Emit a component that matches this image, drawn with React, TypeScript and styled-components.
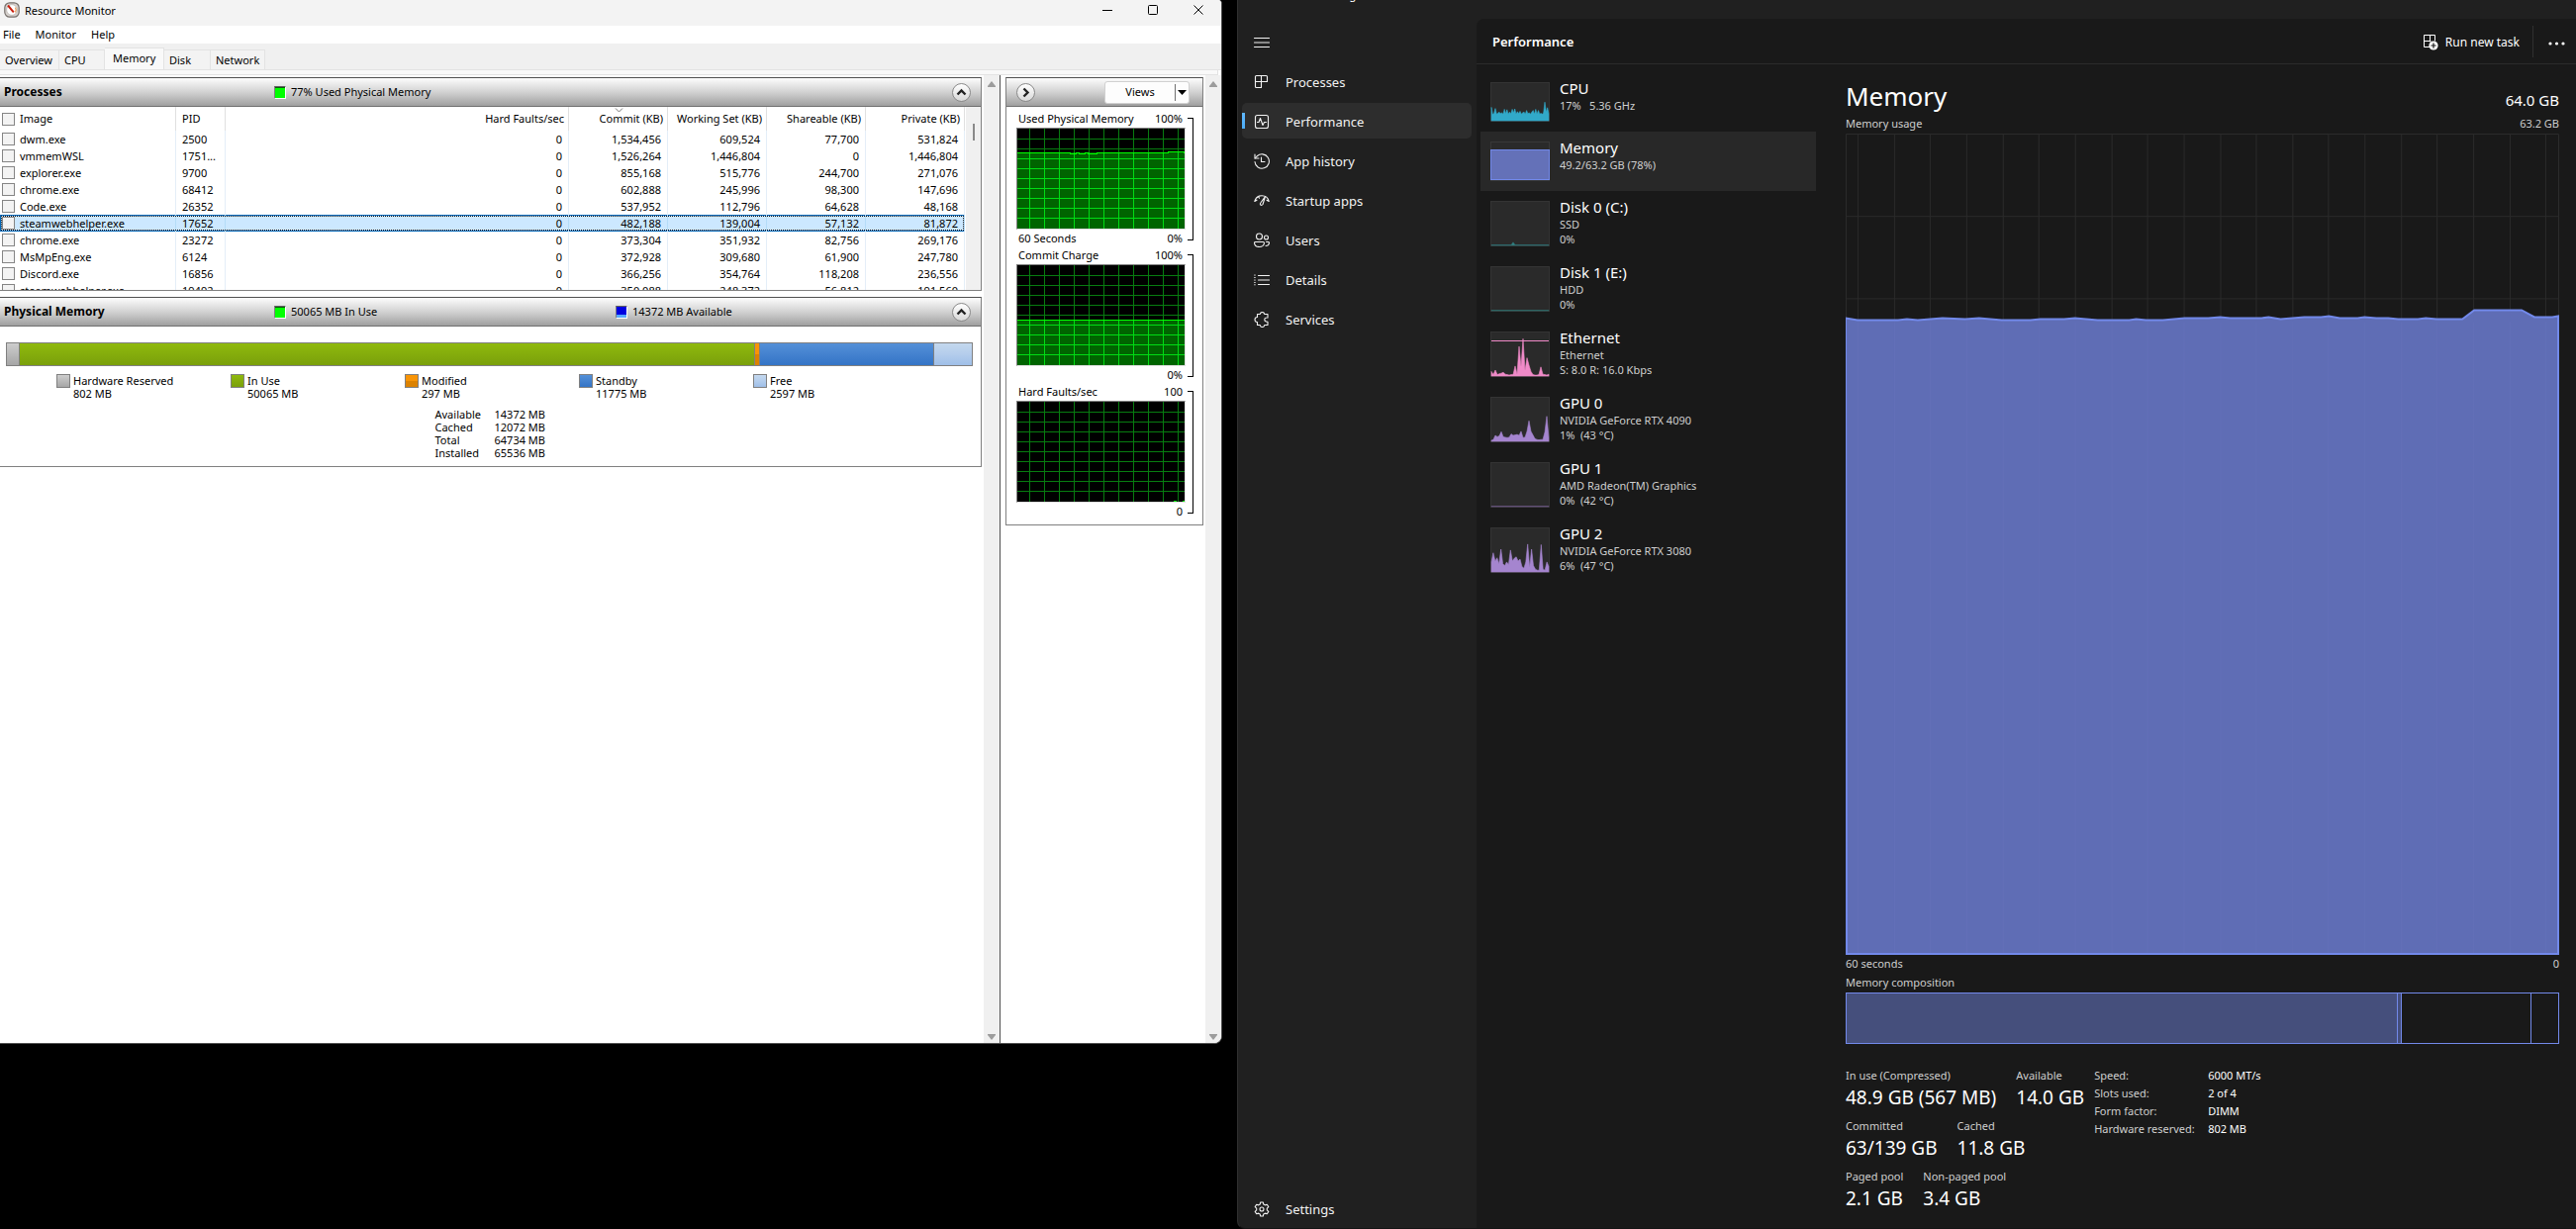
import React from 'react';
import styled, { createGlobalStyle, css } from 'styled-components';

const GlobalStyle = createGlobalStyle`
  *, *::before, *::after { box-sizing: border-box; }
  html, body, #root { height: 100%; }
  body {
    margin: 0;
    background: #000;
    font-family: "Noto Sans", "Open Sans", sans-serif;
    font-size: 11px;
    line-height: 16px;
    overflow: hidden;
  }
  button {
    font: inherit;
    color: inherit;
    background: none;
    border: 0;
    padding: 0;
    margin: 0;
    text-align: left;
    cursor: default;
  }
  h1, h2, h3, p, dl, dd, dt, ul { margin: 0; padding: 0; font: inherit; list-style: none; }
`;

const Desktop = styled.div`
  display: grid;
  grid-template-columns: minmax(0, 1250fr) minmax(0, 1353fr);
  height: 100vh;
  background: #000;
`;

/* ---------- Resource Monitor ---------- */

const MonitorSlot = styled.div`
  display: flex;
  padding: 0 15px 187px 0;
  min-height: 0;
`;

const MonitorWindow = styled.section`
  flex: 1;
  min-width: 0;
  display: flex;
  flex-direction: column;
  overflow: hidden;
  background: #fff;
  color: #000;
  border-radius: 0 4px 8px 0;
  border-right: 1px solid #505050;
  border-bottom: 1px solid #505050;
`;

const MonitorTitle = styled.header`
  display: flex;
  align-items: flex-start;
  height: 26px;
  padding-left: 4px;
  background: #f3f3f3;
  svg { display: block; }
  h1 { flex: 1; padding: 3px 0 0 5px; }
`;

const AppIcon = styled.svg`
  margin-top: 2px;
`;

const CaptionButton = styled.button`
  width: 46px;
  height: 20px;
  display: grid;
  place-items: center;
`;

const MenuBar = styled.nav`
  display: flex;
  gap: 15px;
  height: 18px;
  padding-left: 3px;
  align-items: center;
  background: #fff;
`;

const TabStrip = styled.div`
  display: flex;
  align-items: flex-end;
  height: 27px;
  background: #f0f0f0;
  border-bottom: 1px solid #e3e3e3;
`;

const Tab = styled.button<{ $width: number; $active?: boolean }>`
  width: ${p => p.$width}px;
  height: 20px;
  padding-left: 5px;
  background: #f3f3f3;
  border: solid #e3e3e3;
  border-width: 1px 1px 0 0;
  white-space: nowrap;
  ${p => p.$active && css`
    height: 22px;
    padding: 0 0 1px 8px;
    background: #f9f9f9;
  `}
`;

const TabEdge = styled.div`
  height: 5px;
  margin-right: 3px;
  background: #f9f9f9;
  border: solid #e3e3e3;
  border-width: 0 1px 1px 0;
`;

const MonitorBody = styled.div`
  flex: 1;
  min-height: 0;
  display: flex;
`;

const Pane = styled.div`
  flex: 1;
  min-width: 0;
  display: flex;
  flex-direction: column;
  gap: 6px;
  padding: 2px 2px 0 0;
`;

const SidePane = styled.aside`
  width: 208px;
  padding: 2px 2px 0 5px;
  border-left: 1px solid #505050;
`;

const Frame = styled.section`
  border: 1px solid #808080;
  border-top-color: #505050;
  background: #fff;
`;

const OpenFrame = styled(Frame)`
  border-left: 0;
`;

const headerSurface = css`
  height: 29px;
  background: linear-gradient(#fdfdfd, #d2d2d2 50%, #9f9f9f);
  border-bottom: 1px solid #707070;
`;

const FrameHeader = styled.header`
  ${headerSurface}
  display: grid;
  grid-template-columns: 277fr 345fr 340fr 29px;
  align-items: center;
  h2 { padding-left: 4px; font-size: 12px; font-weight: 700; }
`;

const Meter = styled.div`
  display: flex;
  align-items: center;
  gap: 5px;
`;

const MeterBox = styled.i<{ $tone: 'green' | 'blue' }>`
  width: 12px;
  height: 13px;
  border: 1px solid #fff;
  border-top-color: #606060;
  border-left-color: #808080;
  background: ${p => p.$tone === 'green'
    ? 'linear-gradient(#0a5a0a 1px, #00ff00 1px)'
    : 'linear-gradient(#0000e0 8px, #58a8ff 8px)'};
`;

const RoundButton = styled.button`
  width: 19px;
  height: 19px;
  display: grid;
  place-items: center;
  border: 1px solid #8a8a8a;
  border-radius: 50%;
  background: linear-gradient(#fff, #d8d8d8);
`;

const TableArea = styled.div`
  display: flex;
  height: 185px;
  overflow: hidden;
`;

const ProcessTable = styled.table`
  flex: 1;
  width: 100%;
  height: max-content;
  table-layout: fixed;
  border-collapse: separate;
  border-spacing: 0;
  th, td {
    padding: 0 6px 0 0;
    border-right: 1px solid #e4eef8;
    font-weight: 400;
    text-align: right;
    white-space: nowrap;
    overflow: hidden;
  }
  th { position: relative; height: 24px; padding-right: 4px; border-color: #e0e0e0; }
  td { height: 17px; line-height: 16px; }
  th:nth-child(1), td:nth-child(1) { padding-left: 2px; text-align: left; }
  th:nth-child(2), td:nth-child(2) { padding-left: 6px; text-align: left; }
`;

const Row = styled.tr<{ $selected?: boolean }>`
  ${p => p.$selected && css`
    background: #cce8ff;
    box-shadow: inset 0 0 0 1px #0067b8;
    outline: 1px dotted #101010;
    outline-offset: -2px;
    td { border-color: #b4dcf8; }
  `}
`;

const CheckLabel = styled.label`
  display: flex;
  align-items: center;
  gap: 5px;
`;

const Check = styled.input`
  appearance: none;
  flex: none;
  width: 13px;
  height: 13px;
  margin: 0;
  border: 1px solid #858585;
  background: #f3f3f3;
`;

const SortMark = styled.svg`
  position: absolute;
  top: 1px;
  left: 46px;
`;

const TableScroll = styled.div`
  width: 16px;
  flex: none;
  padding: 17px 0 0 7px;
  background: #f0f0f0;
  border-left: 1px solid #fff;
  &::before {
    content: "";
    display: block;
    width: 2px;
    height: 17px;
    background: #8a8a8a;
  }
`;

const ScrollTrack = styled.div`
  width: 16px;
  flex: none;
  display: flex;
  flex-direction: column;
  justify-content: space-between;
  align-items: center;
  padding: 6px 0 3px;
  background: #f0f0f0;
`;

const MemoryBody = styled.div`
  padding: 16px 8px 7px 6px;
`;

const tones = {
  reserved: 'linear-gradient(#cdcdcd, #a6a6a6)',
  inUse: 'linear-gradient(#8fb90d, #7aa00b)',
  modified: 'linear-gradient(#f89406 50%, #dc8200 50%)',
  standby: 'linear-gradient(#5490d8, #3474c6)',
  free: 'linear-gradient(#c4d8ee, #b4cdec 50%, #9fbfe8)',
};
type Tone = keyof typeof tones;

const MemoryBar = styled.div`
  display: flex;
  height: 24px;
  border: 1px solid #808080;
`;

const Segment = styled.div<{ $tone: Tone; $size: number }>`
  flex: ${p => p.$size} 1 0;
  min-width: 0;
  background: ${p => tones[p.$tone]};
  & + & { border-left: 1px solid #808080; }
`;

const Legend = styled.ul`
  display: grid;
  grid-template-columns: repeat(5, 1fr);
  margin-top: 8px;
  padding: 0 46px 0 51px;
  line-height: 13px;
  li { display: flex; gap: 3px; }
`;

const Swatch = styled.i<{ $tone: Tone }>`
  width: 14px;
  height: 14px;
  flex: none;
  border: 1px solid #808080;
  background: ${p => tones[p.$tone]};
`;

const Totals = styled.dl`
  display: grid;
  grid-template-columns: 60px 50px;
  justify-content: center;
  margin-top: 8px;
  line-height: 13px;
  white-space: nowrap;
`;

const SideHeader = styled.header`
  ${headerSurface}
  display: flex;
  align-items: center;
  justify-content: space-between;
  padding: 0 13px 0 10px;
`;

const ViewsBox = styled.div`
  display: flex;
  width: 86px;
  height: 23px;
  align-items: center;
  background: #fdfdfd;
  border: 1px solid #d0d0d0;
  border-radius: 3px;
  button:first-child { flex: 1; text-align: center; }
  button:last-child { width: 14px; height: 17px; border-left: 1px solid #707070; display: grid; place-items: center; }
`;

const Graphs = styled.div`
  padding: 4px 9px 4px 10px;
`;

const Graph = styled.figure`
  display: grid;
  grid-template-columns: 1fr 8px;
  margin: 0;
`;

const GraphLabels = styled.div`
  display: flex;
  justify-content: space-between;
  height: 17px;
  padding: 0 3px 0 2px;
`;

const GraphCanvas = styled.svg`
  display: block;
  width: 100%;
  height: 103px;
  background: #000;
  border: 1px solid #808080;
  border-right-color: #e0e0e0;
  border-bottom-color: #e0e0e0;
`;

const Bracket = styled.i`
  grid-column: 2;
  margin: 7px 0 7px 2px;
  border: solid #000;
  border-width: 1px 1px 1px 0;
`;

const GraphFoot = styled(GraphLabels)`
  height: 18px;
  padding-top: 1px;
`;

/* ---------- Task Manager ---------- */

const TaskWindow = styled.section`
  display: flex;
  flex-direction: column;
  height: calc(100vh + 29px);
  margin-top: -29px;
  background: #202020;
  color: #fff;
  border-left: 1px solid #303030;
  border-bottom: 1px solid #141414;
  border-radius: 0 0 0 8px;
`;

const TaskTitle = styled.header`
  height: 48px;
  flex: none;
  display: flex;
  align-items: center;
  padding-left: 58px;
`;

const TaskBody = styled.div`
  flex: 1;
  min-height: 0;
  display: flex;
`;

const NavRail = styled.nav`
  width: 241px;
  flex: none;
  display: flex;
  flex-direction: column;
  gap: 4px;
  padding: 5px 5px 2px 4px;
  font-size: 13px;
`;

const NavButton = styled.button<{ $active?: boolean }>`
  display: flex;
  align-items: center;
  gap: 16px;
  height: 36px;
  padding: 1px 0 0 12px;
  border-radius: 5px;
  color: #f2f2f2;
  ${p => p.$active && css`
    background: linear-gradient(#60b8ff, #4cacf5) left center / 3px 16px no-repeat, #2d2d2d;
  `}
`;

const NavSpacer = styled.div`
  flex: 1;
`;

const Content = styled.main`
  flex: 1;
  min-width: 0;
  display: flex;
  flex-direction: column;
  background: #191919;
  border-radius: 8px 0 0 0;
`;

const CommandBar = styled.header`
  display: flex;
  align-items: center;
  height: 46px;
  padding: 0 11px 0 16px;
  border-bottom: 1px solid #2b2b2b;
  font-size: 12px;
  h2 { flex: 1; font-size: 13px; font-weight: 600; }
`;

const RunButton = styled.button`
  display: flex;
  align-items: center;
  gap: 7px;
  padding-top: 2px;
`;

const Divider = styled.i`
  width: 1px;
  height: 32px;
  margin: 0 15px 0 13px;
  background: #303030;
`;

const Panels = styled.div`
  flex: 1;
  min-height: 0;
  display: flex;
`;

const DeviceList = styled.div`
  width: 343px;
  flex: none;
  padding: 8px 0 0 4px;
`;

const Device = styled.button<{ $active?: boolean; $tall?: boolean }>`
  display: flex;
  align-items: flex-start;
  width: 100%;
  gap: 10px;
  height: ${p => (p.$tall ? 66 : 60)}px;
  padding: 6px 0 0 10px;
  background: ${p => (p.$active ? '#282828' : 'transparent')};
  color: #cfcfcf;
  line-height: 15px;
  svg { flex: none; margin-top: 4px; }
  h3 { font-size: 15px; line-height: 20px; color: #fff; }
`;

const Detail = styled.section`
  flex: 1;
  min-width: 0;
  display: flex;
  flex-direction: column;
  padding: 13px 17px 17px 30px;
  color: #cfcfcf;
`;

const DetailTitle = styled.div`
  display: flex;
  justify-content: space-between;
  align-items: baseline;
  color: #fff;
  font-size: 15px;
  height: 39px;
  line-height: 38px;
  h3 { font-size: 26px; }
`;

const CaptionRow = styled.div`
  display: flex;
  justify-content: space-between;
  height: 18px;
`;

const UsageChart = styled.svg`
  flex: 1;
  min-height: 0;
  width: 100%;
  display: block;
  path { vector-effect: non-scaling-stroke; }
`;

const FootRow = styled(CaptionRow)`
  height: 20px;
  padding-top: 1px;
`;

const Composition = styled.div`
  display: flex;
  height: 52px;
  flex: none;
  margin: 2px 0 23px;
  border: 1px solid #7289ea;
`;

const CompositionPart = styled.div<{ $size: number; $fill?: boolean }>`
  flex: ${p => p.$size} 1 0;
  background: ${p => (p.$fill ? '#454f7c' : 'transparent')};
  & + & { border-left: 1px solid #7289ea; }
`;

const Stats = styled.div`
  display: flex;
  gap: 10px;
  line-height: 18px;
  white-space: nowrap;
`;

const StatRows = styled.div`
  display: grid;
  gap: 7px;
`;

const StatRow = styled.dl`
  display: flex;
  gap: 20px;
  dd { color: #fff; font-size: 19px; line-height: 26px; }
`;

const Specs = styled.dl`
  display: grid;
  grid-template-columns: 115px auto;
  align-content: start;
  dd { color: #fff; }
`;

/* ---------- data ---------- */

const processes = [
  ['dwm.exe', '2500', '0', '1,534,456', '609,524', '77,700', '531,824'],
  ['vmmemWSL', '1751...', '0', '1,526,264', '1,446,804', '0', '1,446,804'],
  ['explorer.exe', '9700', '0', '855,168', '515,776', '244,700', '271,076'],
  ['chrome.exe', '68412', '0', '602,888', '245,996', '98,300', '147,696'],
  ['Code.exe', '26352', '0', '537,952', '112,796', '64,628', '48,168'],
  ['steamwebhelper.exe', '17652', '0', '482,188', '139,004', '57,132', '81,872'],
  ['chrome.exe', '23272', '0', '373,304', '351,932', '82,756', '269,176'],
  ['MsMpEng.exe', '6124', '0', '372,928', '309,680', '61,900', '247,780'],
  ['Discord.exe', '16856', '0', '366,256', '354,764', '118,208', '236,556'],
  ['steamwebhelper.exe', '19492', '0', '350,088', '248,372', '56,812', '191,560'],
];

const memory: { label: string; mb: number; tone: Tone }[] = [
  { label: 'Hardware Reserved', mb: 802, tone: 'reserved' },
  { label: 'In Use', mb: 50065, tone: 'inUse' },
  { label: 'Modified', mb: 297, tone: 'modified' },
  { label: 'Standby', mb: 11775, tone: 'standby' },
  { label: 'Free', mb: 2597, tone: 'free' },
];

const usedLine = 'M0 24H53V25H59V24H62V25H68V24H71V25H80V24H152V23H168V24H170';

const usagePoints: [number, number][] = [
  [0, 186], [12, 188], [53, 188], [62, 187], [73, 188], [98, 186], [121, 187], [135, 186], [158, 188], [187, 188],
  [197, 187], [221, 187], [232, 186], [255, 188], [287, 188], [294, 187], [304, 188], [321, 188], [343, 186],
  [367, 186], [379, 185], [389, 186], [421, 186], [428, 185], [440, 187], [464, 185], [481, 185], [489, 184],
  [500, 186], [518, 186], [525, 185], [537, 186], [549, 186], [559, 187], [579, 187], [587, 186], [598, 187],
  [624, 187], [636, 178], [684, 178], [697, 185], [715, 185], [721, 184],
];

interface Spark { color: string; fill: string; values: number[] }
const sparks: Record<string, Spark> = {
  cpu: { color: '#31a9c9', fill: '#31a9c9', values: [34, 16, 18, 31, 17, 19, 22, 18, 20, 17, 29, 18, 28, 17, 22, 18, 29, 20, 30, 17, 23, 18, 24, 17, 20, 22, 17, 26, 18, 20, 17, 22, 26, 17, 29, 17, 26, 17, 19, 17, 20, 47, 22, 33, 18] },
  disk0: { color: '#2f6f72', fill: '#2f8080', values: [1, 1, 1, 1, 1, 1, 1, 1, 1, 1, 1, 7, 1, 1, 1, 1, 1, 1, 1, 1, 1, 1, 1, 1, 1, 1, 1, 1, 1, 1] },
  disk1: { color: '#2f6f6c', fill: '#2f6f6c', values: [1, 1] },
  net: { color: '#f08ac8', fill: '#f08ac8', values: [10, 3, 13, 3, 5, 6, 8, 4, 3, 2, 3, 3, 22, 4, 65, 20, 82, 12, 40, 24, 10, 3, 2, 2, 3, 20, 4, 3, 2, 4] },
  gpu0: { color: '#a585cf', fill: '#a585cf', values: [2, 4, 13, 10, 12, 21, 10, 9, 8, 9, 16, 13, 14, 15, 13, 22, 8, 9, 22, 45, 22, 14, 6, 4, 3, 4, 4, 20, 55, 8] },
  gpu1: { color: '#6c5884', fill: '#6c5884', values: [1, 1] },
  gpu2: { color: '#a585cf', fill: '#a585cf', values: [22, 42, 24, 31, 18, 50, 18, 14, 22, 16, 48, 24, 30, 33, 24, 28, 12, 8, 22, 61, 10, 50, 14, 6, 4, 4, 60, 6, 4, 22, 12] },
};

const SparkChart = ({ kind, h }: { kind: string; h: number }) => {
  const s = sparks[kind];
  const bottom = h - 1;
  const step = 58 / (s.values.length - 1);
  const pts = s.values.map((v, i) => `${(1 + i * step).toFixed(1)} ${(bottom - (v / 100) * h).toFixed(1)}`);
  return (
    <svg width="60" height={h} viewBox={`0 0 60 ${h}`} aria-hidden="true">
      <rect x=".5" y=".5" width="59" height={h - 1} fill="#2a2a2a" stroke="#343434" />
      <path d={`M1 ${bottom}L${pts.join('L')}L59 ${bottom}Z`} fill={s.fill} stroke={s.color} strokeWidth=".6" />
      {kind === 'net' && <path d="M1 9.5H59" stroke="#f08ac8" />}
    </svg>
  );
};

const MemorySpark = () => (
  <svg width="60" height="40" viewBox="0 0 60 40" aria-hidden="true">
    <rect x=".5" y=".5" width="59" height="39" fill="#2a2a2a" stroke="#383838" />
    <rect x=".5" y="8.5" width="59" height="30" fill="#6471b8" stroke="#7289ea" />
  </svg>
);

const stroke = { fill: 'none', stroke: 'currentColor', strokeLinejoin: 'round', strokeLinecap: 'round' } as const;

const icons: Record<string, React.ReactNode> = {
  menu: <path d="M.5 3.5H15.5M.5 8H15.5M.5 12.5H15.5" />,
  processes: <path d="M2.5 1.5H12.5Q13.5 1.5 13.5 2.5V7.5H1.5V2.5Q1.5 1.5 2.5 1.5ZM7.5 1.5V13.5H2.5Q1.5 13.5 1.5 12.5V7.5" />,
  performance: <><rect x="1.5" y="1.5" width="13" height="13" rx="2" /><path d="M3.5 8.5H5L6.5 4.5L9 11.5L10.5 8.5H12.5" /></>,
  history: <><path d="M1 8.5A7.2 7.2 0 1 0 3 3L1.2 5" /><path d="M1 1V5H5M7.5 4V8.5H11" /></>,
  startup: <><path d="M.8 8.5A7.4 7.4 0 0 1 15.2 8.5M.8 8.5L3 7.2M15.2 8.5L13 7.2M4.5 3.6L5.5 5.2" /><path d="M11.5 3.5L9 11.5Q7.8 13 6.6 11.8Q6 11 6.8 10L11.5 3.5Z" /></>,
  users: <><circle cx="5.5" cy="4" r="3" /><circle cx="12.5" cy="5" r="2" /><path d="M1.5 9.5H9.5Q10.5 9.5 10.5 10.5Q10 14.5 5.5 14.5T.5 10.5Q.5 9.5 1.5 9.5ZM12.5 9.5H14.5Q15.5 9.5 15.5 10.5Q15 13.5 12 13.5" /></>,
  details: <path d="M4.5 3.5H15.5M4.5 8H15.5M4.5 12.5H15.5M.7 3H1.2M.7 5.5H1.2M.7 8H1.2M.7 10.5H1.2M.7 12.8H1.2" />,
  services: <path d="M3.5 2.5H6.3Q6.5.5 8.5.5T10.7 2.5H14V6Q10.8 5.8 10.8 8T14 10.2V13.5H10.7Q10.5 15.5 8.5 15.5T6.3 13.5H3.5V10.5Q1 10.5 1 8T3.5 5.5Z" />,
  settings: <><path d="M6.7 1H9.3L9.8 3L11.3 3.9L13.3 3.3L14.8 5.6L13.3 7.1V8.9L14.8 10.4L13.3 12.7L11.3 12.1L9.8 13L9.3 15H6.7L6.2 13L4.7 12.1L2.7 12.7L1.2 10.4L2.7 8.9V7.1L1.2 5.6L2.7 3.3L4.7 3.9L6.2 3Z" /><circle cx="8" cy="8" r="2" /></>,
};

const Icon = ({ name }: { name: string }) => (
  <svg width="16" height="16" viewBox="0 0 16 16" {...stroke} strokeWidth="1.1" aria-hidden="true">{icons[name]}</svg>
);

const navItems = [
  ['processes', 'Processes'], ['performance', 'Performance'], ['history', 'App history'], ['startup', 'Startup apps'],
  ['users', 'Users'], ['details', 'Details'], ['services', 'Services'],
];

const devices = [
  { kind: 'cpu', name: 'CPU', lines: ['17%\u2002 5.36 GHz'] },
  { kind: 'memory', name: 'Memory', lines: ['49.2/63.2 GB (78%)'] },
  { kind: 'disk0', name: 'Disk 0 (C:)', lines: ['SSD', '0%'] },
  { kind: 'disk1', name: 'Disk 1 (E:)', lines: ['HDD', '0%'] },
  { kind: 'net', name: 'Ethernet', lines: ['Ethernet', 'S: 8.0 R: 16.0 Kbps'] },
  { kind: 'gpu0', name: 'GPU 0', lines: ['NVIDIA GeForce RTX 4090', '1%\u2002(43 °C)'] },
  { kind: 'gpu1', name: 'GPU 1', lines: ['AMD Radeon(TM) Graphics', '0%\u2002(42 °C)'] },
  { kind: 'gpu2', name: 'GPU 2', lines: ['NVIDIA GeForce RTX 3080', '6%\u2002(47 °C)'] },
];

/* ---------- pieces ---------- */

const Chevron = ({ side }: { side?: boolean }) => (
  <svg width="11" height="11" viewBox="0 0 11 11" fill="none" stroke="#222" strokeWidth="2.4" aria-hidden="true">
    <path d={side ? 'M3.5 1.5L7.5 5.5L3.5 9.5' : 'M1.5 7.5L5.5 3.5L9.5 7.5'} />
  </svg>
);

const Scroll = () => (
  <ScrollTrack>
    <svg width="10" height="6" viewBox="0 0 10 6" aria-hidden="true"><path d="M5 0L9 5V6H1V5Z" fill="#9c9c9c" /></svg>
    <svg width="10" height="6" viewBox="0 0 10 6" aria-hidden="true"><path d="M5 6L9 1V0H1V1Z" fill="#9c9c9c" /></svg>
  </ScrollTrack>
);

const gridLines = (from: number) => {
  const cols = Array.from({ length: 11 }, (_, i) => `M${12.5 + i * 15} ${from}V101`).join('');
  const rows = Array.from({ length: 9 }, (_, i) => 10.5 + i * 10).filter(y => y >= from).map(y => `M0 ${y}H169`).join('');
  return cols + rows;
};

const MiniGraph = ({ title, max, left, min, line, level }: { title: string; max: string; left?: string; min: string; line?: string; level?: number }) => (
  <Graph>
    <div>
      <GraphLabels><span>{title}</span><span>{max}</span></GraphLabels>
      <GraphCanvas viewBox="0 0 169 101" preserveAspectRatio="none" shapeRendering="crispEdges" fill="none">
        <path d={gridLines(0)} stroke="#077c10" />
        {line && level && (
          <>
            <rect y={level} width="169" height={101 - level} fill="#006400" />
            <path d={gridLines(level)} stroke="#00dc14" />
            <path d={line} stroke="#00ff00" transform="translate(0 .5)" />
          </>
        )}
        {!line && <path d="M158 100.5H161M167 100.5H169" stroke="#00ff00" />}
      </GraphCanvas>
      <GraphFoot><span>{left}</span><span>{min}</span></GraphFoot>
    </div>
    <Bracket />
  </Graph>
);

const ResourceMonitor = () => (
  <MonitorWindow>
    <MonitorTitle>
      <AppIcon width="16" height="16" viewBox="0 0 16 16" aria-hidden="true">
        <rect x=".8" y=".8" width="14.4" height="14.4" rx="5" fill="#d8d4d0" stroke="#77706c" strokeWidth="1.2" />
        <circle cx="8" cy="8" r="5.4" fill="#fff" stroke="#b9b2ae" strokeWidth=".8" />
        <path d="M11.5 5.5Q13 8 11.5 10.5" fill="none" stroke="#e8a060" strokeWidth="1.4" />
        <path d="M4 3.5L9.8 10.4" stroke="#c81e0e" strokeWidth="2" />
      </AppIcon>
      <h1>Resource Monitor</h1>
      <CaptionButton aria-label="Minimize"><svg width="10" height="10" viewBox="0 0 10 10"><path d="M0 5.5H10" stroke="#000" /></svg></CaptionButton>
      <CaptionButton aria-label="Maximize"><svg width="10" height="10" viewBox="0 0 10 10"><rect x=".5" y=".5" width="9" height="9" rx="1" fill="none" stroke="#000" /></svg></CaptionButton>
      <CaptionButton aria-label="Close"><svg width="10" height="10" viewBox="0 0 10 10"><path d="M.5 .5L9.5 9.5M9.5 .5L.5 9.5" stroke="#000" /></svg></CaptionButton>
    </MonitorTitle>
    <MenuBar><button>File</button><button>Monitor</button><button>Help</button></MenuBar>
    <TabStrip role="tablist">
      <Tab role="tab" $width={60}>Overview</Tab>
      <Tab role="tab" $width={46}>CPU</Tab>
      <Tab role="tab" aria-selected $width={60} $active>Memory</Tab>
      <Tab role="tab" $width={47}>Disk</Tab>
      <Tab role="tab" $width={55}>Network</Tab>
    </TabStrip>
    <TabEdge />
    <MonitorBody>
      <Pane>
        <OpenFrame>
          <FrameHeader>
            <h2>Processes</h2>
            <Meter><MeterBox $tone="green" />77% Used Physical Memory</Meter>
            <span />
            <RoundButton aria-label="Collapse processes"><Chevron /></RoundButton>
          </FrameHeader>
          <TableArea>
            <ProcessTable>
              <colgroup>
                <col width="178" /><col width="50" /><col /><col width="100" /><col width="100" /><col width="100" /><col width="100" />
              </colgroup>
              <thead>
                <tr>
                  <th><CheckLabel><Check type="checkbox" />Image</CheckLabel></th>
                  <th>PID</th>
                  <th>Hard Faults/sec</th>
                  <th>
                    <SortMark width="9" height="5" viewBox="0 0 9 5" fill="none" stroke="#777"><path d="M1 .5L4.5 4L8 .5" /></SortMark>
                    Commit (KB)
                  </th>
                  <th>Working Set (KB)</th>
                  <th>Shareable (KB)</th>
                  <th>Private (KB)</th>
                </tr>
              </thead>
              <tbody>
                {processes.map(([name, ...cells], i) => (
                  <Row key={i} $selected={i === 5}>
                    <td><CheckLabel><Check type="checkbox" />{name}</CheckLabel></td>
                    {cells.map((c, j) => <td key={j}>{c}</td>)}
                  </Row>
                ))}
              </tbody>
            </ProcessTable>
            <TableScroll />
          </TableArea>
        </OpenFrame>
        <OpenFrame>
          <FrameHeader>
            <h2>Physical Memory</h2>
            <Meter><MeterBox $tone="green" />50065 MB In Use</Meter>
            <Meter><MeterBox $tone="blue" />14372 MB Available</Meter>
            <RoundButton aria-label="Collapse physical memory"><Chevron /></RoundButton>
          </FrameHeader>
          <MemoryBody>
            <MemoryBar>{memory.map(m => <Segment key={m.tone} $tone={m.tone} $size={m.mb} />)}</MemoryBar>
            <Legend>
              {memory.map(m => (
                <li key={m.tone}><Swatch $tone={m.tone} /><div>{m.label}<br />{m.mb} MB</div></li>
              ))}
            </Legend>
            <Totals>
              <dt>Available</dt><dd>14372 MB</dd>
              <dt>Cached</dt><dd>12072 MB</dd>
              <dt>Total</dt><dd>64734 MB</dd>
              <dt>Installed</dt><dd>65536 MB</dd>
            </Totals>
          </MemoryBody>
        </OpenFrame>
      </Pane>
      <Scroll />
      <SidePane>
        <Frame>
          <SideHeader>
            <RoundButton aria-label="Hide graphs"><Chevron side /></RoundButton>
            <ViewsBox>
              <button>Views</button>
              <button aria-label="Choose view size"><svg width="9" height="5" viewBox="0 0 9 5"><path d="M0 0H9L4.5 5Z" /></svg></button>
            </ViewsBox>
          </SideHeader>
          <Graphs>
            <MiniGraph title="Used Physical Memory" max="100%" left="60 Seconds" min="0%" line={usedLine} level={24} />
            <MiniGraph title="Commit Charge" max="100%" min="0%" line="M0 55H169" level={55} />
            <MiniGraph title="Hard Faults/sec" max="100" min="0" />
          </Graphs>
        </Frame>
      </SidePane>
      <Scroll />
    </MonitorBody>
  </MonitorWindow>
);

const usagePath = usagePoints.map(p => p.join(' ')).join('L');
const usageColumns = (top: number, bottom: number) =>
  Array.from({ length: 20 }, (_, i) => `M${Math.round(12 + i * 36.65) + 0.5} ${top}V${bottom}`).join('');
const usageRows = Array.from({ length: 9 }, (_, i) => `M0 ${Math.round((i + 1) * 82.8) + 0.5}H721`).join('');

const TaskManager = () => (
  <TaskWindow>
    <TaskTitle>Task Manager</TaskTitle>
    <TaskBody>
      <NavRail>
        <NavButton aria-label="Open navigation"><Icon name="menu" /></NavButton>
        {navItems.map(([icon, label]) => (
          <NavButton key={icon} $active={icon === 'performance'}><Icon name={icon} />{label}</NavButton>
        ))}
        <NavSpacer />
        <NavButton><Icon name="settings" />Settings</NavButton>
      </NavRail>
      <Content>
        <CommandBar>
          <h2>Performance</h2>
          <RunButton>
            <svg width="16" height="16" viewBox="0 0 16 16" {...stroke} aria-hidden="true">
              <path d="M7 12.5H1.5V.5H12.5V6M1.5 6.5H8M7.5 .5V7" />
              <circle cx="11" cy="11" r="4.6" fill="#fff" stroke="none" />
              <path d="M11 8.8V13.2M8.8 11H13.2" stroke="#191919" strokeWidth="1.2" />
            </svg>
            Run new task
          </RunButton>
          <Divider />
          <button aria-label="More options">
            <svg width="17" height="4" viewBox="0 0 17 4" fill="#fff"><circle cx="2" cy="2" r="1.6" /><circle cx="8.5" cy="2" r="1.6" /><circle cx="15" cy="2" r="1.6" /></svg>
          </button>
        </CommandBar>
        <Panels>
          <DeviceList>
            {devices.map(d => (
              <Device key={d.kind} $active={d.kind === 'memory'} $tall={d.lines.length > 1}>
                {d.kind === 'memory' ? <MemorySpark /> : <SparkChart kind={d.kind} h={d.lines.length > 1 ? 46 : 40} />}
                <div>
                  <h3>{d.name}</h3>
                  {d.lines.map(l => <p key={l}>{l}</p>)}
                </div>
              </Device>
            ))}
          </DeviceList>
          <Detail>
            <DetailTitle><h3>Memory</h3><span>64.0 GB</span></DetailTitle>
            <CaptionRow><span>Memory usage</span><span>63.2 GB</span></CaptionRow>
            <UsageChart viewBox="0 0 722 828" preserveAspectRatio="none" fill="none">
              <path d={`M.5 828V.5H721.5V828${usageColumns(0, 828)}${usageRows}`} stroke="#2b2b2b" />
              <path d={`M0 827L${usagePath}L721 827Z`} fill="#5f6db5" />
              <path d={usageColumns(190, 826)} stroke="#6370b8" />
              <path d={`M1 827L${usagePath}L721 827Z`} stroke="#7289ea" strokeWidth="2" />
            </UsageChart>
            <FootRow><span>60 seconds</span><span>0</span></FootRow>
            <span>Memory composition</span>
            <Composition>
              <CompositionPart $size={559} $fill />
              <CompositionPart $size={3} $fill />
              <CompositionPart $size={131} />
              <CompositionPart $size={27} />
            </Composition>
            <Stats>
              <StatRows>
                <StatRow>
                  <div><dt>In use (Compressed)</dt><dd>48.9 GB (567 MB)</dd></div>
                  <div><dt>Available</dt><dd>14.0 GB</dd></div>
                </StatRow>
                <StatRow>
                  <div><dt>Committed</dt><dd>63/139 GB</dd></div>
                  <div><dt>Cached</dt><dd>11.8 GB</dd></div>
                </StatRow>
                <StatRow>
                  <div><dt>Paged pool</dt><dd>2.1 GB</dd></div>
                  <div><dt>Non-paged pool</dt><dd>3.4 GB</dd></div>
                </StatRow>
              </StatRows>
              <Specs>
                <dt>Speed:</dt><dd>6000 MT/s</dd>
                <dt>Slots used:</dt><dd>2 of 4</dd>
                <dt>Form factor:</dt><dd>DIMM</dd>
                <dt>Hardware reserved:</dt><dd>802 MB</dd>
              </Specs>
            </Stats>
          </Detail>
        </Panels>
      </Content>
    </TaskBody>
  </TaskWindow>
);

export default function App() {
  return (
    <>
      <GlobalStyle />
      <Desktop>
        <MonitorSlot><ResourceMonitor /></MonitorSlot>
        <TaskManager />
      </Desktop>
    </>
  );
}
